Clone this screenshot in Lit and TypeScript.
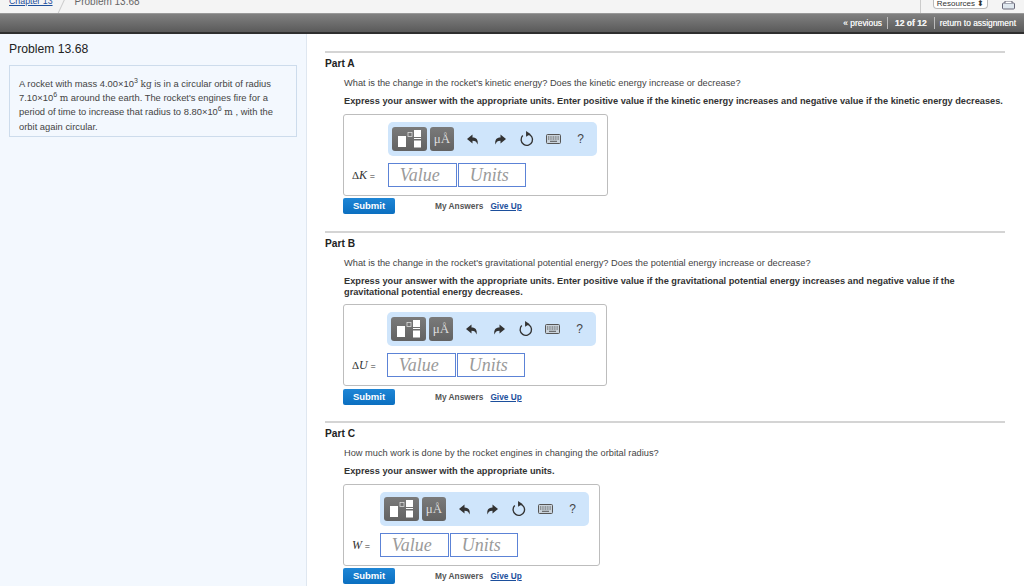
import { LitElement, html, css, svg } from "lit";
import { customElement } from "lit/decorators.js";

interface Part { id: string; q: string; ex: string[]; sym: string; tool: number; box: number; h: number; boxGap: number; subGap: number }
const parts: Part[] = [
  { id: "Part A", q: "What is the change in the rocket's kinetic energy? Does the kinetic energy increase or decrease?",
    ex: ["Express your answer with the appropriate units. Enter positive value if the kinetic energy increases and negative value if the kinetic energy decreases."], sym: "K", tool: 44, box: 265, h: 180, boxGap: 7, subGap: 1 },
  { id: "Part B", q: "What is the change in the rocket's gravitational potential energy? Does the potential energy increase or decrease?",
    ex: ["Express your answer with the appropriate units. Enter positive value if the gravitational potential energy increases and negative value if the", "gravitational potential energy decreases."], sym: "U", tool: 43, box: 264, h: 190, boxGap: 6, subGap: 2 },
  { id: "Part C", q: "How much work is done by the rocket engines in changing the orbital radius?",
    ex: ["Express your answer with the appropriate units."], sym: "W", tool: 36, box: 257, h: 165, boxGap: 7, subGap: 1 },
];

const undo = svg`<path d="M1 5 L6.5 .5 V3.4 C10.5 3.4 12.5 6 11.5 10.5 C10.6 7.8 9.4 6.8 6.5 6.8 V9.5 Z" fill="#333"/>`;
const redo = svg`<path d="M13 5 L7.5 .5 V3.4 C3.5 3.4 1.5 6 2.5 10.5 C3.4 7.8 4.6 6.8 7.5 6.8 V9.5 Z" fill="#333"/>`;

@customElement("app-root")
export class AppRoot extends LitElement {
  static styles = css`
    :host { display: block; width: 1024px; height: 586px; overflow: hidden; background: #fff; font-family: "Liberation Sans", Arial, sans-serif; color: #333; }
    .top { height: 13px; background: #f4f4f4; border-bottom: 1px solid #999; display: flex; align-items: flex-start; overflow: hidden; }
    .crumb-a { margin: -4px 0 0 9px; font-size: 8.8px; color: #1c4f9c; text-decoration: underline; line-height: 11px; }
    .slash { width: 1px; height: 16px; background: #ccc; transform: rotate(25deg); margin: -2px 13px 0 8px; }
    .crumb { margin-top: -4px; font-size: 10px; color: #666; line-height: 11px; }
    .vsep { width: 1px; height: 13px; background: #ccc; margin-left: auto; margin-right: 12px; }
    .res { width: 55px; height: 9px; box-sizing: border-box; border: 1px solid #bbb; border-top: 0; border-radius: 0 0 4px 4px; background: #fff; font-size: 8px; line-height: 8px; text-align: center; color: #333; white-space: nowrap; overflow: visible; }
    .print { width: 13px; margin: 1px 9px 0 14px; display: flex; }
    .bar { height: 18px; background: linear-gradient(#808080, #5a5a5a); border-bottom: 2px solid #2f2f2f; display: flex; justify-content: flex-end; align-items: center; color: #eee; font-size: 8.4px; padding-right: 3px; text-shadow: 0 0 .6px #fff; }
    .bar span { padding: 0 5px; line-height: 12px; }
    .bar .n { font-weight: 700; font-size: 8.5px; padding: 0 7px; }
    .bar .b { border-left: 1px solid #bbb; }
    .wrap { display: flex; height: 552px; }
    .side { width: 307px; flex: none; background: #f3f8fe; border-right: 1px solid #dfe7f0; padding: 8px 9px 0; box-sizing: border-box; }
    .side h1 { margin: 0 0 9px; font-size: 12.2px; font-weight: 400; color: #222; line-height: 14px; }
    .prob { border: 1px solid #cddcec; padding: 11px 9px 10px; height: 72px; box-sizing: border-box; width: 288px; font-size: 9.4px; line-height: 13.2px; color: #444; white-space: nowrap; }
    .m { font-family: "DejaVu Serif", serif; font-size: 9px; }
    sup { font-size: 7px; line-height: 0; }
    .main { flex: 1; padding: 17px 19px 0 18px; min-width: 0; }
    .part { border-top: 2px solid #d4d4d4; box-sizing: border-box; }
    .pid { font-size: 10.2px; font-weight: 700; color: #222; line-height: 12px; margin-top: 5px; }
    .body { padding-left: 19px; }
    .q { font-size: 9.25px; line-height: 12px; color: #444; margin-top: 7px; white-space: nowrap; }
    .ex { font-size: 9.23px; font-weight: 700; line-height: 11px; color: #333; margin-top: 7px; white-space: nowrap; }
    .box { border: 1px solid #bdbdbd; border-radius: 3px; box-sizing: border-box; height: 82px; margin-left: -1px; padding-top: 7px; }
    .tool { height: 34px; width: 209px; background: #cfe5fb; border-radius: 5px; display: flex; align-items: center; padding-left: 4px; box-sizing: border-box; }
    .tb { height: 24px; background: linear-gradient(#7a7a7a, #626262); border-radius: 3px; display: flex; align-items: center; justify-content: center; box-sizing: border-box; }
    .tb.a { width: 35px; margin-right: 3px; }
    .tb.b { width: 24px; margin-right: 5px; color: #ddd; font-family: "Liberation Serif", serif; font-size: 13px; }
    .ic { width: 27px; display: flex; justify-content: center; align-items: center; font-size: 12px; color: #444; }
    .row { display: flex; align-items: center; margin-top: 7px; }
    .lab { font-family: "Liberation Serif", serif; font-size: 11px; color: #333; white-space: nowrap; box-sizing: border-box; margin-left: 8px; }
    .lab i { font-size: 12px; }
    .lab b { font-weight: 400; font-family: "Liberation Sans", sans-serif; font-size: 9px; }
    .inp { height: 24px; box-sizing: border-box; border: 1px solid #5c83d6; width: 68.5px; margin-right: 1px; padding-right: 5px; font-family: "Liberation Serif", serif; font-style: italic; font-size: 18px; color: #9a9a9a; display: flex; align-items: center; justify-content: center; }
    .acts { display: flex; align-items: center; height: 17px; margin-left: -1px; }
    .sub { width: 52px; height: 16px; background: linear-gradient(#1e86d6, #0b6fc0); border-radius: 2px; color: #fff; font-size: 9.5px; font-weight: 700; display: flex; align-items: center; justify-content: center; margin-right: 40px; }
    .my { font-size: 8.35px; font-weight: 700; color: #555; margin-right: 7px; }
    .give { font-size: 8.3px; font-weight: 700; color: #1c4f9c; text-decoration: underline; }
  `;

  private part(p: Part) {
    return html`<div class="part" style="height:${p.h}px">
      <div class="pid">${p.id}</div>
      <div class="body">
        <div class="q">${p.q}</div>
        ${p.ex.map((l, i) => html`<div class="ex" style=${i ? "margin-top:0" : ""}>${l}</div>`)}
        <div class="box" style="width:${p.box}px;margin-top:${p.boxGap}px">
          <div class="tool" style="margin-left:${p.tool}px">
            <div class="tb a"><svg width="25" height="20" viewBox="0 0 25 20"><rect x="1" y="7" width="8" height="11" fill="#fff"/><rect x="11" y="3.5" width="4" height="4" fill="none" stroke="#ddd" stroke-width=".8"/><rect x="17" y="1" width="7" height="7" fill="#fff"/><rect x="17" y="9" width="7" height="1" fill="#fff"/><rect x="17" y="11.5" width="7" height="7" fill="#fff"/></svg></div>
            <div class="tb b">μÅ</div>
            <div class="ic"><svg width="14" height="11" viewBox="0 0 14 11">${undo}</svg></div>
            <div class="ic"><svg width="14" height="11" viewBox="0 0 14 11">${redo}</svg></div>
            <div class="ic"><svg width="16" height="16" viewBox="0 0 14 14"><path d="M7.6 2.6 A5 5 0 1 1 3.3 4" fill="none" stroke="#333" stroke-width="1.2"/><path d="M6.2 0 L10 2.6 L6.2 5 Z" fill="#333"/></svg></div>
            <div class="ic"><svg width="15" height="10" viewBox="0 0 15 10"><rect x=".5" y=".5" width="14" height="9" rx="1" fill="#c9d2da" stroke="#555"/><path d="M2 3 H13 M2 5 H13" stroke="#555" stroke-dasharray="1 .7"/><path d="M4 7.3 H11" stroke="#555"/></svg></div>
            <div class="ic">?</div>
          </div>
          <div class="row">
            <div class="lab" style="width:${p.tool - 8}px">${p.sym === "W" ? "" : "Δ"}<i>${p.sym}</i> <b>=</b></div>
            <div class="inp">Value</div>
            <div class="inp">Units</div>
          </div>
        </div>
        <div class="acts" style="margin-top:${p.subGap}px"><div class="sub">Submit</div><span class="my">My Answers</span><span class="give">Give Up</span></div>
      </div>
    </div>`;
  }

  render() {
    return html`
      <div class="top">
        <span class="crumb-a">Chapter 13</span><span class="slash"></span><span class="crumb">Problem 13.68</span>
        <span class="vsep"></span><span class="res">Resources ⬍</span>
        <span class="print"><svg width="13" height="9" viewBox="0 0 13 9"><rect x=".5" y="2" width="12" height="6" rx="1" fill="#dfe7ee" stroke="#667"/><path d="M3 2 V0 H10 V2" fill="#fff" stroke="#667"/></svg></span>
      </div>
      <div class="bar"><span>« previous</span><span class="b n">12 of 12</span><span class="b">return to assignment</span></div>
      <div class="wrap">
        <div class="side">
          <h1>Problem 13.68</h1>
          <div class="prob">A rocket with mass 4.00×10<sup>3</sup> <span class="m">kg</span> is in a circular orbit of radius<br>7.10×10<sup>6</sup> <span class="m">m</span> around the earth. The rocket's engines fire for a<br>period of time to increase that radius to 8.80×10<sup>6</sup> <span class="m">m</span> , with the<br>orbit again circular.</div>
        </div>
        <div class="main">${parts.map((p) => this.part(p))}</div>
      </div>`;
  }
}
